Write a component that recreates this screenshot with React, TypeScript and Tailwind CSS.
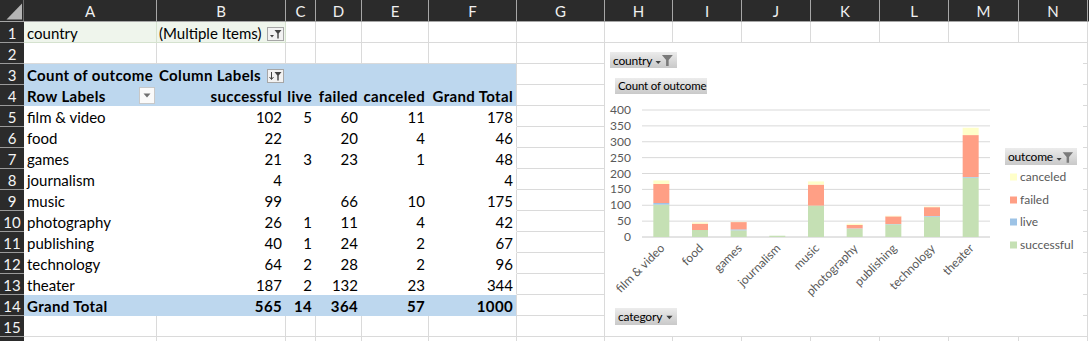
import React from "react";
import { twMerge } from "tailwind-merge";

// column widths of the sheet (A..N)
const COLS = [
  { k: "A", w: "w-[133px]" },
  { k: "B", w: "w-[129px]" },
  { k: "C", w: "w-[30px]" },
  { k: "D", w: "w-[46px]" },
  { k: "E", w: "w-[67px]" },
  { k: "F", w: "w-[88px]" },
  { k: "G", w: "w-[88px]" },
  { k: "H", w: "w-[68px]" },
  { k: "I", w: "w-[69px]" },
  { k: "J", w: "w-[69px]" },
  { k: "K", w: "w-[69px]" },
  { k: "L", w: "w-[69px]" },
  { k: "M", w: "w-[70px]" },
  { k: "N", w: "w-[69px]" },
];

type Cell = { c?: React.ReactNode; cls?: string };

const PIVOT: [string, number, number | null, number | null, number | null, number][] = [
  ["film & video", 102, 5, 60, 11, 178],
  ["food", 22, null, 20, 4, 46],
  ["games", 21, 3, 23, 1, 48],
  ["journalism", 4, null, null, null, 4],
  ["music", 99, null, 66, 10, 175],
  ["photography", 26, 1, 11, 4, 42],
  ["publishing", 40, 1, 24, 2, 67],
  ["technology", 64, 2, 28, 2, 96],
  ["theater", 187, 2, 132, 23, 344],
];

const NUM = "justify-end pr-[3px]";
const PIV = "border-transparent bg-white";
const BAND = "border-transparent bg-[#bdd7ee] font-bold tracking-[0.35px]";

function Row({ n, h = "h-[21px]", cells = [] }: { n?: number; h?: string; cells?: Cell[] }) {
  return (
    <div className={twMerge("flex", h)}>
      <div className="flex w-[24px] shrink-0 items-end justify-center border-b border-[#9a9a9a] bg-[#2b2b2b] leading-[18px] text-[#f4f4f4]">
        {n}
      </div>
      {COLS.map((col, i) => {
        const s = cells[i] ?? {};
        return (
          <div
            key={col.k}
            className={twMerge(
              "flex shrink-0 items-end overflow-visible whitespace-nowrap border-b border-r border-[#dadada] pl-[3px] leading-[18px]",
              col.w,
              s.cls,
            )}
          >
            {s.c}
          </div>
        );
      })}
    </div>
  );
}

function FilterIcon({ sort = false }: { sort?: boolean }) {
  return (
    <svg width="15" height="12" viewBox="0 0 15 12">
      {sort ? (
        <path d="M3.5 2v7M1.5 7l2 2.5 2-2.5" stroke="#444" strokeWidth="1" fill="none" />
      ) : (
        <path d="M2 7h4l-2 2.5z" fill="#444" />
      )}
      <path d="M6.5 2h7l-2.8 3.6v5h-1.4v-5z" fill="#444" />
    </svg>
  );
}

function CellButton({ children }: { children: React.ReactNode }) {
  return (
    <span className="mb-[1px] mr-[1px] flex h-[14px] w-[17px] items-center justify-center border border-[#a6a6a6] bg-[#f2f2f2] tracking-normal">
      {children}
    </span>
  );
}

function ChartButton({ label, funnel = false, cls }: { label: string; funnel?: boolean; cls: string }) {
  return (
    <div
      className={twMerge(
        "absolute flex h-[17px] items-center gap-[3px] whitespace-nowrap bg-gradient-to-b from-[#ececec] to-[#c9c9c9] pl-[3px] pr-[3px] text-[12px] leading-[17px] text-black",
        cls,
      )}
    >
      <span className="tracking-[-0.2px]">{label}</span>
      {funnel === true && (
        <svg width="19" height="12" viewBox="0 0 19 12">
          <path d="M0.5 7h5.5l-2.75 3z" fill="#404040" />
          <path d="M7 1h11l-4.2 5v6h-2.6v-6z" fill="#7a7a7a" />
        </svg>
      )}
      {label === "category" && (
        <svg width="10" height="8" viewBox="0 0 10 8">
          <path d="M1.5 2.5h7l-3.5 4z" fill="#404040" />
        </svg>
      )}
    </div>
  );
}

// chart geometry, in page pixels
const X0 = 642;
const X1 = 990;
const Y0 = 237;
const PX = 127 / 400;
const STEP = (X1 - X0) / 9;
const COLORS = { successful: "#c5e0b4", live: "#9dc3e6", failed: "#ff9f85", canceled: "#ffffc9" };

function Chart() {
  return (
    <div className="absolute left-[605px] top-[43px] h-[293px] w-[478px] bg-white">
      <svg className="absolute left-0 top-0" width="478" height="293" viewBox="605 43 478 293">
        {[0, 1, 2, 3, 4, 5, 6, 7, 8].map((k) => {
          const y = Y0 - k * 50 * PX;
          return (
            <g key={k}>
              <line x1={X0} x2={X1} y1={y} y2={y} stroke={k === 0 ? "#c8c8c8" : "#d9d9d9"} strokeWidth="1" />
              <text x={631} y={y + 4} textAnchor="end" fontSize="12" fill="#595959">
                {k * 50}
              </text>
            </g>
          );
        })}
        {PIVOT.map(([name, s, l, f, c], i) => {
          const cx = X0 + STEP * (i + 0.5);
          const parts: [number, string][] = [
            [s, COLORS.successful],
            [l ?? 0, COLORS.live],
            [f ?? 0, COLORS.failed],
            [c ?? 0, COLORS.canceled],
          ];
          let acc = 0;
          return (
            <g key={name}>
              {parts.map(([v, col], j) => {
                const y = Y0 - (acc + v) * PX;
                acc += v;
                return v > 0 ? <rect key={j} x={cx - 8} width="16" y={y} height={v * PX} fill={col} /> : null;
              })}
              <text
                x={cx + 4}
                y={249}
                textAnchor="end"
                fontSize="12"
                fill="#595959"
                transform={`rotate(-45 ${cx + 4} 249)`}
              >
                {name}
              </text>
            </g>
          );
        })}
        {(["canceled", "failed", "live", "successful"] as const).map((k, i) => {
          const y = [177, 200, 222, 245][i];
          return (
            <g key={k}>
              <rect x="1010" y={y - 3.5} width="7" height="7" fill={COLORS[k]} />
              <text x="1020" y={y + 4} fontSize="12" fill="#595959">
                {k}
              </text>
            </g>
          );
        })}
      </svg>
      <ChartButton label="country" funnel cls="left-[5px] top-[9px] h-[16px] w-[67px]" />
      <ChartButton label="Count of outcome" cls="left-[10px] top-[35px] h-[16px] w-[92px] text-[11.5px]" />
      <ChartButton label="outcome" funnel cls="left-[400px] top-[105px] w-[72px]" />
      <ChartButton label="category" cls="left-[10px] top-[265px] w-[62px]" />
    </div>
  );
}

export default function App() {
  return (
    <div className="relative h-[341px] w-[1089px] overflow-hidden bg-white font-['Lato','Liberation_Sans',sans-serif] text-[15px] text-black">
      {/* column header */}
      <div className="flex h-[22px] border-b border-[#a6a6a6] bg-[#2b2b2b] text-[#f0f0f0]">
        <div className="w-[24px] shrink-0 border-r border-[#6b6b6b]">
          <svg width="23" height="21" viewBox="0 0 23 21">
            <path d="M6.5 19.5L22 3.5v16z" fill="#b4b4b4" />
          </svg>
        </div>
        {COLS.map((col) => (
          <div
            key={col.k}
            className={twMerge("flex shrink-0 items-center justify-center border-r border-[#a6a6a6] leading-[18px]", col.w)}
          >
            {col.k}
          </div>
        ))}
      </div>

      <Row
        n={1}
        cells={[
          { c: "country", cls: "bg-[#eff5ec] border-[#d5e2cf]" },
          {
            c: (
              <>
                <span>(Multiple Items)</span>
                <CellButton>
                  <FilterIcon />
                </CellButton>
              </>
            ),
            cls: "bg-[#eff5ec] border-[#d5e2cf] justify-between pl-[2px]",
          },
        ]}
      />
      <Row n={2} />
      <Row
        n={3}
        cells={[
          { c: "Count of outcome", cls: BAND },
          {
            c: (
              <>
                <span>Column Labels</span>
                <CellButton>
                  <FilterIcon sort />
                </CellButton>
              </>
            ),
            cls: twMerge(BAND, "justify-between pl-[2px]"),
          },
          { cls: BAND },
          { cls: BAND },
          { cls: BAND },
          { cls: twMerge(BAND, "border-r-[#dadada]") },
        ]}
      />
      <Row
        n={4}
        cells={[
          {
            c: (
              <>
                <span>Row Labels</span>
                <span className="mb-[1px] mr-[1px] flex h-[17px] w-[16px] items-center justify-center border border-[#c8c8c8] bg-[#fafafa]">
                  <svg width="8" height="5" viewBox="0 0 8 5">
                    <path d="M0.5 0.5h7l-3.5 4z" fill="#707070" />
                  </svg>
                </span>
              </>
            ),
            cls: twMerge(BAND, "justify-between"),
          },
          { c: "successful", cls: twMerge(BAND, NUM) },
          { c: "live", cls: twMerge(BAND, NUM) },
          { c: "failed", cls: twMerge(BAND, NUM) },
          { c: "canceled", cls: twMerge(BAND, NUM) },
          { c: "Grand Total", cls: twMerge(BAND, NUM, "border-r-[#dadada]") },
        ]}
      />
      {PIVOT.map(([name, s, l, f, c, t], i) => (
        <Row
          key={name}
          n={5 + i}
          cells={[
            { c: name, cls: PIV },
            { c: s, cls: twMerge(PIV, NUM) },
            { c: l, cls: twMerge(PIV, NUM) },
            { c: f, cls: twMerge(PIV, NUM) },
            { c: c, cls: twMerge(PIV, NUM) },
            { c: t, cls: twMerge(PIV, NUM, "border-r-[#dadada]") },
          ]}
        />
      ))}
      <Row
        n={14}
        cells={[
          { c: "Grand Total", cls: BAND },
          { c: 565, cls: twMerge(BAND, NUM) },
          { c: 14, cls: twMerge(BAND, NUM) },
          { c: 364, cls: twMerge(BAND, NUM) },
          { c: 57, cls: twMerge(BAND, NUM) },
          { c: 1000, cls: twMerge(BAND, NUM, "border-r-[#dadada]") },
        ]}
      />
      <Row n={15} />
      <Row />

      <Chart />
    </div>
  );
}
